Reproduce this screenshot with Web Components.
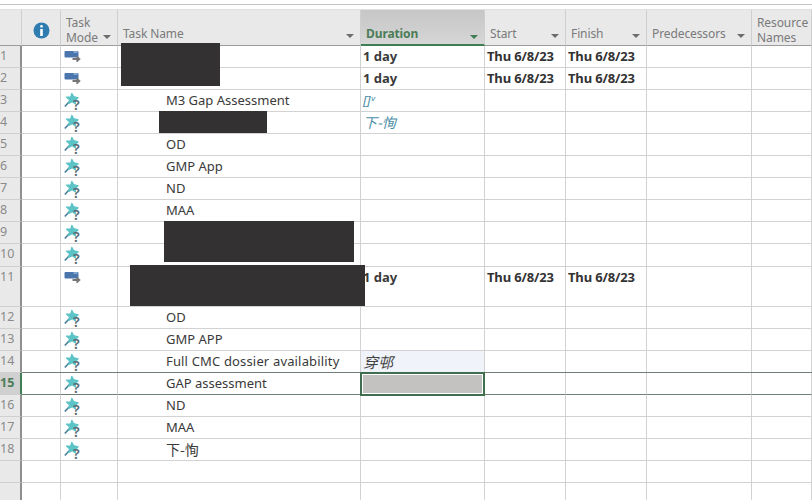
<!DOCTYPE html>
<html><head><meta charset="utf-8">
<style>
html,body{margin:0;padding:0;background:#fff;overflow:hidden}
body{width:812px;height:500px;font-family:"Noto Sans","Open Sans",sans-serif}
</style></head><body>
<template id="sheet-t"><style>
:host{display:block;position:relative;width:812px;height:500px;overflow:hidden;background:#fff}
.top{height:4px;border-bottom:1px solid #c4c4c4;margin-bottom:4px}
</style><div class="top"></div><slot></slot></template>

<template id="head-t"><style>
:host{display:grid;grid-template-columns:var(--cols);grid-template-rows:36px;height:37px;background:#e9e9e9;border-top:1px solid #e0e0e0;box-sizing:border-box}
</style><slot></slot></template>

<template id="hcell-t"><style>
:host{display:flex;align-items:flex-end;box-sizing:border-box;border-right:1px solid #cfcfcf;border-bottom:1px solid #9c9c9c;position:relative;padding:0 6px 4px 5px;font:12px/15px "Noto Sans",sans-serif;letter-spacing:-.1px;color:#7a7a7a;min-width:0}
:host([active]){background:linear-gradient(#c6c6c6,#d6d6d6);color:#4c7c58;font-weight:700;border-bottom:2px solid #3f7d55;padding-bottom:3px}
:host([center]){align-items:flex-start;justify-content:center;padding:12px 0 0}
:host([tall]){padding-bottom:0}
:host([center]) .txt{flex:none;display:block;height:17px;line-height:0;white-space:normal}
.txt{flex:1;white-space:pre-line;min-width:0}
.arrow{width:0;height:0;border-left:4px solid transparent;border-right:4px solid transparent;border-top:4px solid #6d6d6d;margin:0 0 3px 2px;flex:none}
:host([tall]) .arrow{margin-bottom:6px}
:host([active]) .arrow{border-top-color:#3f7d55;margin-bottom:2px}
:host(:not([drop])) .arrow{display:none}
</style><span class="txt"><slot></slot></span><i class="arrow"></i></template>

<template id="row-t"><style>
:host{display:grid;grid-template-columns:var(--cols);height:var(--h,22px);box-sizing:border-box;font:13px/17px "Noto Sans",sans-serif;color:#3a3a3a}
.c{box-sizing:border-box;border-right:1px solid #d2d2d2;border-bottom:1px solid #d2d2d2;padding:2px 2px 0;white-space:nowrap;overflow:visible;min-width:0}
.num{background:#e9e9e9;border-right:2px solid #8f8f8f;font-size:12.5px;color:#8a8a8a;padding:1px 0 0 0;border-bottom-color:#cfcfcf}
.mode{padding:2px 0 0 3px;line-height:0}
.name{padding-left:48px}
.bold{font-weight:700;color:#333;letter-spacing:-.15px}
:host([selected]) .c{border-bottom-color:#6f7f74;box-shadow:0 -1px 0 #6f7f74}
:host([selected]) .num{background:#d0d0d0;color:#4c7c58;font-weight:700;border-right:2px solid #3f7d55;border-bottom-color:#cfcfcf;box-shadow:none}
:host([selected]) .dur{background:#c4c2c0;border:2px solid #3f6f4e;box-shadow:inset 0 0 0 1px #fff;margin:-1px 0 -1px -1px;position:relative}
:host([note]) .dur{background:#f0f3f9}
</style>
<div class="c num"><slot name="num"></slot></div>
<div class="c"></div>
<div class="c mode"><slot name="mode"></slot></div>
<div class="c name"><slot name="name"></slot></div>
<div class="c dur"><slot name="dur"></slot></div>
<div class="c bold"><slot name="start"></slot></div>
<div class="c bold"><slot name="finish"></slot></div>
<div class="c"></div>
<div class="c"></div></template>

<template id="auto-t"><style>:host{display:inline-block;width:20px;height:16px}svg{display:block}</style>
<svg width="20" height="16" viewBox="0 0 20 16"><rect x="0.5" y="3" width="14" height="6.5" rx="1" fill="#4a76ad"/><rect x="9.5" y="3" width="4" height="2" fill="#83a7d0"/><path d="M8.5 11h6.5M12.5 8.3l2.9 2.7-2.9 2.7" fill="none" stroke="#767676" stroke-width="1.8"/></svg></template>

<template id="manual-t"><style>
:host{display:inline-block;position:relative;width:20px;height:19px}svg{display:block}
span{position:absolute;left:9px;top:5px;font:600 14.5px/15px "Noto Sans",sans-serif;color:#5a6a76}
</style>
<svg width="20" height="19" viewBox="0 0 20 19"><path d="M0.8 14.5L5.5 9.5" stroke="#4a7f99" stroke-width="1.7" fill="none"/><path d="M7.8 1.3l1.9 3.4 4.4 1.1-3 2.8.4 3.4-3.2-2.2-3.6 1.7.8-3.6L2.5 5l4.2.1z" fill="#5cc3c6" stroke="#5cc3c6" stroke-width="1.2" stroke-linejoin="round"/></svg><span>?</span></template>

<template id="info-t"><style>:host{display:inline-block;width:17px;height:17px}svg{display:block}</style>
<svg width="17" height="17" viewBox="0 0 17 17"><circle cx="8.5" cy="8.5" r="8" fill="#2e7cb0"/><rect x="7.2" y="3" width="2.6" height="2.6" rx="1.2" fill="#fff"/><rect x="7.2" y="7" width="2.6" height="7" fill="#fff"/></svg></template>

<template id="redact-t"><style>:host{display:block;position:absolute;background:#333132}</style></template>

<ms-sheet style="--cols:22px 39px 57px 243px 124px 81px 81px 105px 60px">
  <ms-head>
    <ms-hcell></ms-hcell>
    <ms-hcell center><ms-info></ms-info></ms-hcell>
    <ms-hcell drop tall>Task
Mode</ms-hcell>
    <ms-hcell drop>Task Name</ms-hcell>
    <ms-hcell drop active>Duration</ms-hcell>
    <ms-hcell drop>Start</ms-hcell>
    <ms-hcell drop>Finish</ms-hcell>
    <ms-hcell drop>Predecessors</ms-hcell>
    <ms-hcell tall>Resource
Names</ms-hcell>
  </ms-head>
  <ms-row><span slot="num">1</span><ms-auto slot="mode"></ms-auto><b slot="dur">1 day</b><span slot="start">Thu 6/8/23</span><span slot="finish">Thu 6/8/23</span></ms-row>
  <ms-row><span slot="num">2</span><ms-auto slot="mode"></ms-auto><b slot="dur">1 day</b><span slot="start">Thu 6/8/23</span><span slot="finish">Thu 6/8/23</span></ms-row>
  <ms-row><span slot="num">3</span><ms-manual slot="mode"></ms-manual><span slot="name">M3 Gap Assessment</span><span slot="dur" style="color:#4a8ea8;font-style:italic">[]ᵛ</span></ms-row>
  <ms-row><span slot="num">4</span><ms-manual slot="mode"></ms-manual><span slot="dur" style="color:#4a8ea8;font:italic 14px/17px 'Noto Sans CJK SC',sans-serif;display:inline-block;height:17px;vertical-align:top">下-恂</span></ms-row>
  <ms-row><span slot="num">5</span><ms-manual slot="mode"></ms-manual><span slot="name">OD</span></ms-row>
  <ms-row><span slot="num">6</span><ms-manual slot="mode"></ms-manual><span slot="name">GMP App</span></ms-row>
  <ms-row><span slot="num">7</span><ms-manual slot="mode"></ms-manual><span slot="name">ND</span></ms-row>
  <ms-row><span slot="num">8</span><ms-manual slot="mode"></ms-manual><span slot="name">MAA</span></ms-row>
  <ms-row><span slot="num">9</span><ms-manual slot="mode"></ms-manual></ms-row>
  <ms-row style="--h:23px"><span slot="num">10</span><ms-manual slot="mode"></ms-manual></ms-row>
  <ms-row style="--h:40px"><span slot="num">11</span><ms-auto slot="mode"></ms-auto><b slot="dur">1 day</b><span slot="start">Thu 6/8/23</span><span slot="finish">Thu 6/8/23</span></ms-row>
  <ms-row><span slot="num">12</span><ms-manual slot="mode"></ms-manual><span slot="name">OD</span></ms-row>
  <ms-row><span slot="num">13</span><ms-manual slot="mode"></ms-manual><span slot="name">GMP APP</span></ms-row>
  <ms-row note><span slot="num">14</span><ms-manual slot="mode"></ms-manual><span slot="name" style="letter-spacing:.16px">Full CMC dossier availability</span><span slot="dur" style="color:#444;font:italic 15px/17px 'Noto Sans CJK SC',sans-serif;display:inline-block;height:17px;vertical-align:top">穿邨</span></ms-row>
  <ms-row selected><span slot="num">15</span><ms-manual slot="mode"></ms-manual><span slot="name">GAP assessment</span></ms-row>
  <ms-row><span slot="num">16</span><ms-manual slot="mode"></ms-manual><span slot="name">ND</span></ms-row>
  <ms-row><span slot="num">17</span><ms-manual slot="mode"></ms-manual><span slot="name">MAA</span></ms-row>
  <ms-row><span slot="num">18</span><ms-manual slot="mode"></ms-manual><span slot="name" style="font:14px/17px 'Noto Sans CJK SC',sans-serif;display:inline-block;height:17px;vertical-align:top">下-恂</span></ms-row>
  <ms-row></ms-row>
  <ms-row></ms-row>
  <ms-redact style="left:121px;top:43px;width:99px;height:43px"></ms-redact>
  <ms-redact style="left:159px;top:111px;width:108px;height:22px"></ms-redact>
  <ms-redact style="left:164px;top:221px;width:190px;height:41px"></ms-redact>
  <ms-redact style="left:130px;top:265px;width:235px;height:41px"></ms-redact>
</ms-sheet>
<script>
function def(tag,tpl){customElements.define(tag,class extends HTMLElement{constructor(){super();this.attachShadow({mode:'open'}).appendChild(document.getElementById(tpl).content.cloneNode(true));}});}
def('ms-sheet','sheet-t');def('ms-head','head-t');def('ms-hcell','hcell-t');def('ms-row','row-t');
def('ms-auto','auto-t');def('ms-manual','manual-t');def('ms-info','info-t');def('ms-redact','redact-t');
</script>
</body></html>
